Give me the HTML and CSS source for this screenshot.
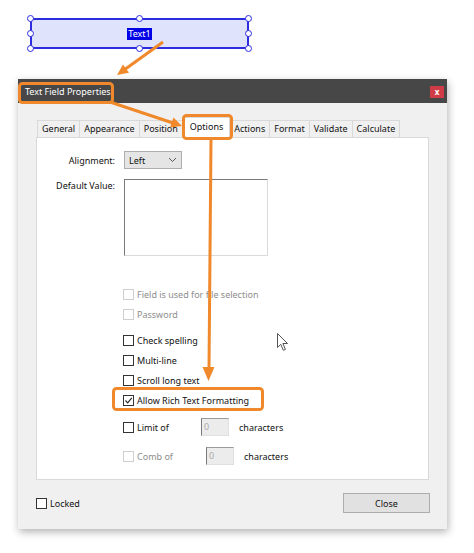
FILE: index.html
```html
<!DOCTYPE html>
<html lang="en">
<head>
  <meta charset="UTF-8">
  <title>Text Field Properties</title>
  <link rel="stylesheet" href="styles.css">
</head>
<body>
  <!-- Selected form field on the page -->
  <div class="field">
    <span class="handle h-tl"></span>
    <span class="handle h-tc"></span>
    <span class="handle h-tr"></span>
    <span class="handle h-ml"></span>
    <span class="handle h-mr"></span>
    <span class="handle h-bl"></span>
    <span class="handle h-bc"></span>
    <span class="handle h-br"></span>
    <span class="field-text">Text1</span>
  </div>

  <!-- Properties dialog -->
  <div class="dialog">
    <div class="titlebar">
      <span class="title">Text Field Properties</span>
      <span class="close-x">x</span>
    </div>
    <div class="dialog-body">
      <ul class="tabs">
        <li>General</li>
        <li>Appearance</li>
        <li>Position</li>
        <li class="active">Options</li>
        <li>Actions</li>
        <li>Format</li>
        <li>Validate</li>
        <li>Calculate</li>
      </ul>
      <div class="panel">
        <div class="form-row">
          <span class="row-label">Alignment:</span>
          <div class="select">
            <span>Left</span>
            <svg width="9" height="6" viewBox="0 0 9 6"><path d="M1 1 L4.5 4.5 L8 1" fill="none" stroke="#555" stroke-width="1"/></svg>
          </div>
        </div>
        <div class="form-row top">
          <span class="row-label">Default Value:</span>
          <div class="textarea"></div>
        </div>

        <div class="checks">
          <div class="check disabled"><span class="box"></span>Field is used for file selection</div>
          <div class="check disabled"><span class="box"></span>Password</div>
          <div class="check gap"><span class="box"></span>Check spelling</div>
          <div class="check"><span class="box"></span>Multi-line</div>
          <div class="check"><span class="box"></span>Scroll long text</div>
          <div class="check">
            <span class="box checked">
              <svg width="9" height="9" viewBox="0 0 9 9"><path d="M1.5 4.5 L3.7 6.8 L7.8 1.8" fill="none" stroke="#222" stroke-width="1.1"/></svg>
            </span>Allow Rich Text Formatting
          </div>
          <div class="check limit">
            <span class="box"></span><span class="check-label">Limit of</span>
            <span class="num-input">0</span><span class="unit">characters</span>
          </div>
          <div class="check comb disabled">
            <span class="box"></span><span class="check-label">Comb of</span>
            <span class="num-input">0</span><span class="unit">characters</span>
          </div>
        </div>
      </div>

      <div class="footer">
        <div class="check"><span class="box"></span>Locked</div>
        <button class="btn">Close</button>
      </div>
    </div>
  </div>

  <!-- Orange call-outs drawn over the screenshot -->
  <svg class="annotations" width="474" height="553" viewBox="0 0 474 553">
    <g fill="none" stroke="#f0892b" stroke-width="3">
      <rect x="19.5" y="83.5" width="93" height="19" rx="3"/>
      <rect x="183.5" y="115.5" width="48" height="23" rx="3"/>
      <rect x="113.5" y="388.5" width="149" height="21" rx="3"/>
      <line x1="163" y1="42" x2="124" y2="70"/>
      <line x1="110" y1="102" x2="173" y2="123"/>
      <line x1="211" y1="139" x2="209" y2="369"/>
    </g>
    <g fill="#f0892b">
      <polygon points="117,75 129,72.7 123,64.6"/>
      <polygon points="182,126 170,127.5 173.5,117.5"/>
      <polygon points="208.5,381 202.5,367 214.5,367"/>
    </g>
  </svg>

  <!-- Mouse pointer -->
  <svg class="cursor" width="12" height="19" viewBox="0 0 12 19">
    <path d="M0.5 0.5 L0.5 14.5 L3.8 11.3 L6.3 17.3 L8.4 16.4 L5.9 10.5 L10.5 10.5 Z" fill="#fff" stroke="#555" stroke-width="1"/>
  </svg>
</body>
</html>
```

FILE: styles.css
```css
/* Global reset and styling */
* {
  margin: 0;
  padding: 0;
  box-sizing: border-box;
}
body {
  font-family: "Noto Sans", "Open Sans", sans-serif;
  font-size: 9px;
  color: #111;
  background-color: #fff;
  width: 474px;
  height: 553px;
  position: relative;
  overflow: hidden;
}
/* Selected text field on the page */
.field {
  position: relative;
  margin: 18px 0 0 30px;
  width: 219px;
  height: 31px;
  background-color: #dfe4fc;
  border: 2px solid #2d2de0;
  display: flex;
  align-items: center;
  justify-content: center;
}
.field-text {
  background-color: #0000e6;
  color: #fff;
  padding: 0 1px;
  line-height: 12px;
}
.handle {
  position: absolute;
  width: 7px;
  height: 7px;
  border-radius: 50%;
  background-color: #fff;
  border: 1px solid #2d2de0;
}
.h-tl { left: -5px; top: -5px; }
.h-tc { left: 104px; top: -5px; }
.h-tr { right: -5px; top: -5px; }
.h-ml { left: -5px; top: 10px; }
.h-mr { right: -5px; top: 10px; }
.h-bl { left: -5px; bottom: -5px; }
.h-bc { left: 104px; bottom: -5px; }
.h-br { right: -5px; bottom: -5px; }
/* Dialog window */
.dialog {
  margin: 30px 0 0 18px;
  width: 429px;
  height: 450px;
  background-color: #f0f0f0;
  box-shadow: 1px 3px 8px rgba(0,0,0,0.3);
  display: flex;
  flex-direction: column;
}
.titlebar {
  height: 24px;
  background-color: #474747;
  display: flex;
  align-items: center;
  justify-content: space-between;
  padding: 0 3px 0 7px;
}
.title {
  color: #fff;
  font-size: 9px;
}
.close-x {
  width: 14px;
  height: 12px;
  margin-top: 2px;
  background-color: #cf3c48;
  color: #fff;
  font-size: 8px;
  font-weight: bold;
  line-height: 11px;
  text-align: center;
}
.dialog-body {
  flex: 1;
  padding: 13px 0 0 18px;
  display: flex;
  flex-direction: column;
}
/* Tabs */
.tabs {
  list-style: none;
  display: flex;
  align-items: flex-end;
  height: 21px;
  padding-left: 1px;
}
.tabs li {
  height: 17px;
  line-height: 15px;
  padding: 0 4px;
  border: 1px solid #d9d9d9;
  border-bottom: none;
  border-left: none;
  background-color: #f0f0f0;
}
.tabs li:first-child {
  border-left: 1px solid #d9d9d9;
}
.tabs li.active {
  height: 21px;
  line-height: 17px;
  padding: 0 6px;
  background-color: #fff;
  border-left: 1px solid #d9d9d9;
  position: relative;
  margin-bottom: -1px;
}
.panel {
  width: 393px;
  height: 343px;
  background-color: #fff;
  border: 1px solid #d9d9d9;
  padding-top: 13px;
}
/* Panel form rows */
.form-row {
  display: flex;
  align-items: center;
  margin-bottom: 10px;
}
.form-row.top {
  align-items: flex-start;
}
.row-label {
  width: 78px;
  text-align: right;
  margin-right: 9px;
}
.select {
  width: 58px;
  height: 18px;
  background-color: #e5e5e5;
  border: 1px solid #adadad;
  display: flex;
  align-items: center;
  justify-content: space-between;
  padding: 0 4px 0 4px;
}
.textarea {
  width: 144px;
  height: 77px;
  background-color: #fff;
  border: 1px solid #dadada;
  border-top-color: #7a7a7a;
  border-left-color: #7a7a7a;
}
/* Checkbox list */
.checks {
  padding-left: 86px;
  padding-top: 18px;
}
.check {
  display: flex;
  align-items: center;
  height: 20px;
}
.check.gap {
  margin-top: 6px;
}
.check.limit {
  margin-top: 7px;
  height: 20px;
}
.check.comb {
  margin-top: 9px;
}
.box {
  width: 11px;
  height: 11px;
  border: 1px solid #333;
  background-color: #fff;
  margin-right: 3px;
  display: flex;
  align-items: center;
  justify-content: center;
}
.check.disabled {
  color: #8d8d8d;
}
.check.disabled .box {
  border-color: #cfcfcf;
}
.check-label {
  width: 64px;
}
.comb .check-label {
  width: 69px;
}
.num-input {
  width: 28px;
  height: 18px;
  background-color: #ececec;
  border: 1px solid #e0e0e0;
  border-left-color: #7a7a7a;
  border-top-color: #9a9a9a;
  color: #aaa;
  padding-left: 2px;
  line-height: 15px;
}
.unit {
  margin-left: 10px;
  color: #111;
}
/* Footer */
.footer {
  display: flex;
  justify-content: space-between;
  align-items: center;
  padding: 13px 17px 0 0;
}
.btn {
  width: 87px;
  height: 20px;
  background-color: #e1e1e1;
  border: 1px solid #adadad;
  font-family: inherit;
  font-size: 9px;
  color: #111;
}
/* Overlays */
.annotations {
  position: absolute;
  left: 0;
  top: 0;
  pointer-events: none;
}
.cursor {
  position: absolute;
  left: 277px;
  top: 333px;
}
```
